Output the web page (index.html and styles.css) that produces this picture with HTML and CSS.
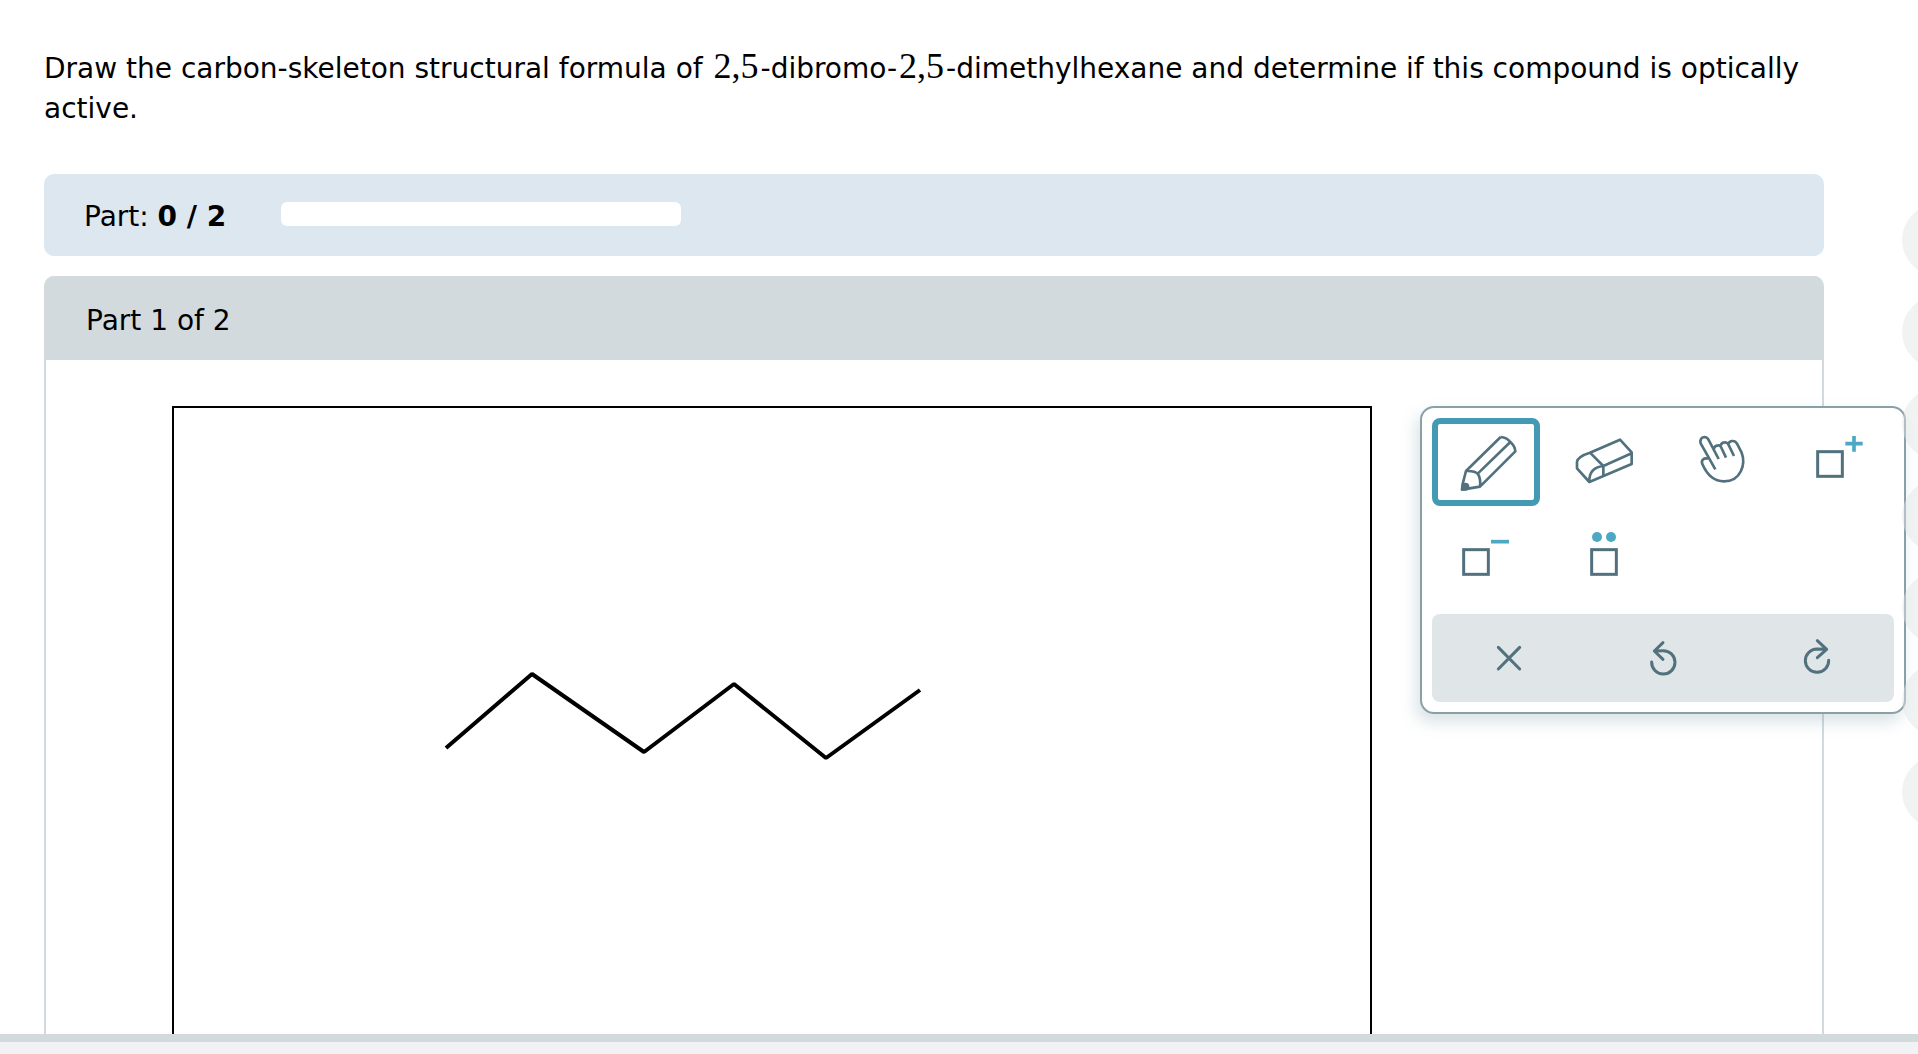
FILE: index.html
```html
<!DOCTYPE html>
<html lang="en">
  <head>
    <meta charset="UTF-8" />
    <meta name="viewport" content="width=device-width, initial-scale=1.0" />
    <title>Structural Formula</title>
    <link rel="stylesheet" href="styles.css">
  </head>
  <body>
    <main>
      <p class="question">
        Draw the carbon-skeleton structural formula of <span class="num">2,5</span>-dibromo-<span class="num">2,5</span>-dimethylhexane and determine if this compound is optically active.
      </p>

      <div class="progress">
        <label for="partProgress">Part: <b>0 / 2</b></label>
        <progress id="partProgress" value="0" max="2"></progress>
      </div>

      <section class="part">
        <h2>Part 1 of 2</h2>
        <div class="workspace">
          <div class="canvas">
            <svg width="1196" height="700" viewBox="0 0 1196 700">
              <polyline points="272,340 358,266 470,344 560,276 652,350 746,282" />
            </svg>
          </div>

          <div class="toolbox">
            <div class="tools">
              <button type="button" class="selected" aria-label="Draw">
                <svg viewBox="18 18 288 228">
                  <path d="M206 57L102 159L92 198L90 215L144 206L250 100Q249 84 235 72Q224 58 206 57M235 72L138 166M102 159Q129 158 138 168Q147 183 144 206" />
                  <circle class="tip" cx="100" cy="206" r="12" />
                </svg>
              </button>
              <button type="button" aria-label="Erase">
                <svg viewBox="18 18 288 228">
                  <path d="M120 104L210 65L245 103V138L118 192L81 151V131Q84 115 120 104L160 144V174M160 144L245 106M118 192Q116 149 160 144" />
                </svg>
              </button>
              <button type="button" aria-label="Move">
                <svg viewBox="18 18 288 228">
                  <path d="M142 154L98 76C95 66 100 58 109 57Q117 57 121 64L152 123M137 94Q139 83 150 82Q156 81 159 87L174 119M158 82Q161 73 170 73Q177 72 181 79L198 114M181 79Q182 71 192 69Q202 68 207 77L221 104C233 136 221 190 168 190C134 190 115 166 103 138C98 126 108 119 120 122" />
                </svg>
              </button>
              <button type="button" aria-label="Add positive charge">
                <svg viewBox="18 18 288 228">
                  <rect x="95" y="101" width="74" height="74" />
                  <path class="mark" d="M178 77H230M204 54V101" />
                </svg>
              </button>
              <button type="button" aria-label="Add negative charge">
                <svg viewBox="18 18 288 228">
                  <rect x="95" y="101" width="74" height="74" />
                  <path class="mark" d="M177 77H231" />
                </svg>
              </button>
              <button type="button" aria-label="Add lone pair">
                <svg viewBox="18 18 288 228">
                  <rect x="125" y="101" width="74" height="74" />
                  <circle class="dot" cx="141" cy="63" r="15" />
                  <circle class="dot" cx="183" cy="63" r="15" />
                </svg>
              </button>
            </div>
            <div class="actions">
              <button type="button" aria-label="Clear">
                <svg viewBox="0 0 144 144">
                  <path d="M40 40L104 105M104 40L40 105" />
                </svg>
              </button>
              <button type="button" aria-label="Undo">
                <svg viewBox="0 0 144 144">
                  <path d="M38 84A35 35 0 1 0 72 50L48 51M72 26L46 51L72 76" />
                </svg>
              </button>
              <button type="button" aria-label="Redo">
                <svg viewBox="0 0 144 144">
                  <path d="M107 79A35 35 0 1 1 72 45L98 46M73 20L101 46L73 71" />
                </svg>
              </button>
            </div>
          </div>
        </div>
      </section>
    </main>

    <div class="rail">
      <span></span>
      <span></span>
      <span></span>
      <span></span>
      <span></span>
      <span></span>
      <span></span>
    </div>

    <footer></footer>
  </body>
</html>
```

FILE: styles.css
```css
* {
  box-sizing: border-box;
}

body {
  font-family: Verdana, "DejaVu Sans", sans-serif;
  font-size: 28px;
  line-height: 40px;
  color: #000;
  background-color: #fff;
  margin: 0;
  height: 100vh;
  display: flex;
  flex-direction: column;
  position: relative;
  overflow: hidden;
}

main {
  flex: 1;
  min-height: 0;
  display: flex;
  flex-direction: column;
  padding: 49px 94px 0 44px;
  overflow: hidden;
}

.question {
  margin: 0 0 45px;
}

.num {
  padding: 0 2px;
  font-family: "Liberation Serif", serif;
  font-size: 36px;
  line-height: 28px;
}

.progress {
  display: flex;
  align-items: flex-start;
  gap: 55px;
  padding: 23px 40px 19px;
  margin-bottom: 20px;
  border-radius: 10px;
  background-color: #dce7f0;
}

progress {
  appearance: none;
  width: 400px;
  height: 24px;
  margin-top: 5px;
  border: none;
  border-radius: 6px;
  background-color: #fff;
  overflow: hidden;
}

progress::-webkit-progress-bar {
  background-color: #fff;
}

.part {
  flex: 1;
  min-height: 0;
  display: flex;
  flex-direction: column;
  border: 2px solid #d3dadd;
  border-width: 0 2px;
  border-radius: 10px 10px 0 0;
}

h2 {
  margin: 0;
  padding: 25px 40px 19px;
  font-size: 28px;
  font-weight: normal;
  background-color: #d3dadd;
  border-radius: 8px 8px 0 0;
}

.workspace {
  flex: 1;
  min-height: 0;
  display: flex;
  align-items: flex-start;
  gap: 48px;
  padding: 46px 0 0 126px;
  margin-right: -84px;
}

.canvas {
  flex: 1;
  min-width: 0;
  border: 2px solid #000;
  overflow: hidden;
}

.canvas svg {
  display: block;
}

.canvas polyline {
  fill: none;
  stroke: #000;
  stroke-width: 4;
  stroke-linejoin: bevel;
}

.toolbox {
  display: flex;
  flex-direction: column;
  gap: 10px;
  padding: 10px;
  border: 2px solid #8aa0a9;
  border-radius: 14px;
  background-color: #fff;
  box-shadow: -4px 8px 16px rgba(80, 125, 135, 0.22);
}

.tools {
  display: grid;
  grid-template-columns: repeat(4, 108px);
  gap: 10px;
}

.toolbox button {
  display: flex;
  align-items: center;
  justify-content: center;
  height: 88px;
  padding: 0;
  border: 6px solid transparent;
  border-radius: 8px;
  background: none;
  cursor: pointer;
}

.toolbox .selected {
  border-color: #4499b3;
}

.toolbox svg {
  fill: none;
  stroke: #50717d;
  stroke-width: 8;
  stroke-linejoin: round;
}

.tools svg {
  width: 96px;
  height: 76px;
}

.tools rect {
  stroke-width: 9;
  stroke-linejoin: miter;
}

.toolbox .tip {
  fill: #50717d;
  stroke: none;
}

.toolbox .mark {
  stroke: #4da8c4;
  stroke-width: 11;
}

.toolbox .dot {
  fill: #4da8c4;
  stroke: none;
}

.actions {
  display: grid;
  grid-template-columns: repeat(3, 1fr);
  border-radius: 8px;
  background-color: #e0e5e7;
}

.actions svg {
  width: 48px;
  height: 48px;
  stroke-width: 9;
  stroke-linecap: round;
}

/* round buttons that peek in from the right edge */
.rail {
  position: absolute;
  top: 204px;
  right: -56px;
  display: flex;
  flex-direction: column;
  gap: 20px;
}

.rail span {
  width: 72px;
  height: 72px;
  border-radius: 50%;
  background-color: rgba(225, 228, 228, 0.45);
}

footer {
  height: 20px;
  border-top: 8px solid #d3dadd;
  background-color: #f0f2f3;
}
```
